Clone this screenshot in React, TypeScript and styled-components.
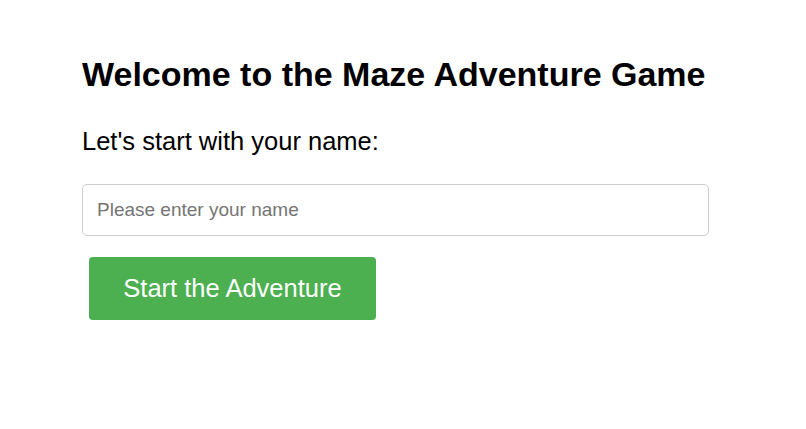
import React from "react";
import styled, { createGlobalStyle } from "styled-components";

const Global = createGlobalStyle`
  html, body { margin: 0; padding: 0; background: #ffffff; }
  body { font-family: "Liberation Sans", Arial, sans-serif; }
`;

const Page = styled.main`
  padding: 54px 0 0 82px;
  width: 626px;
`;

const Title = styled.h1`
  margin: 0;
  font-size: 34px;
  line-height: 40px;
  font-weight: 700;
  color: #000;
  white-space: nowrap;
`;

const Prompt = styled.p`
  margin: 32px 0 0;
  font-size: 25.5px;
  line-height: 30px;
  color: #000;
`;

const NameInput = styled.input`
  display: block;
  box-sizing: border-box;
  width: 627px;
  height: 52px;
  margin: 28px 0 0;
  padding: 0 14px;
  border: 1px solid #cccccc;
  border-radius: 5px;
  font-family: "Liberation Sans", Arial, sans-serif;
  font-size: 19px;
  color: #333;
  &::placeholder { color: #757575; }
`;

const StartButton = styled.button`
  display: block;
  margin: 21px 0 0 7px;
  width: 287px;
  height: 63px;
  border: none;
  border-radius: 4px;
  background: #4caf50;
  color: #fff;
  font-family: "Liberation Sans", Arial, sans-serif;
  font-size: 25.5px;
  cursor: pointer;
`;

export default function App() {
  return (
    <>
      <Global />
      <Page>
        <Title>Welcome to the Maze Adventure Game</Title>
        <Prompt>Let's start with your name:</Prompt>
        <NameInput placeholder="Please enter your name" />
        <StartButton>Start the Adventure</StartButton>
      </Page>
    </>
  );
}
